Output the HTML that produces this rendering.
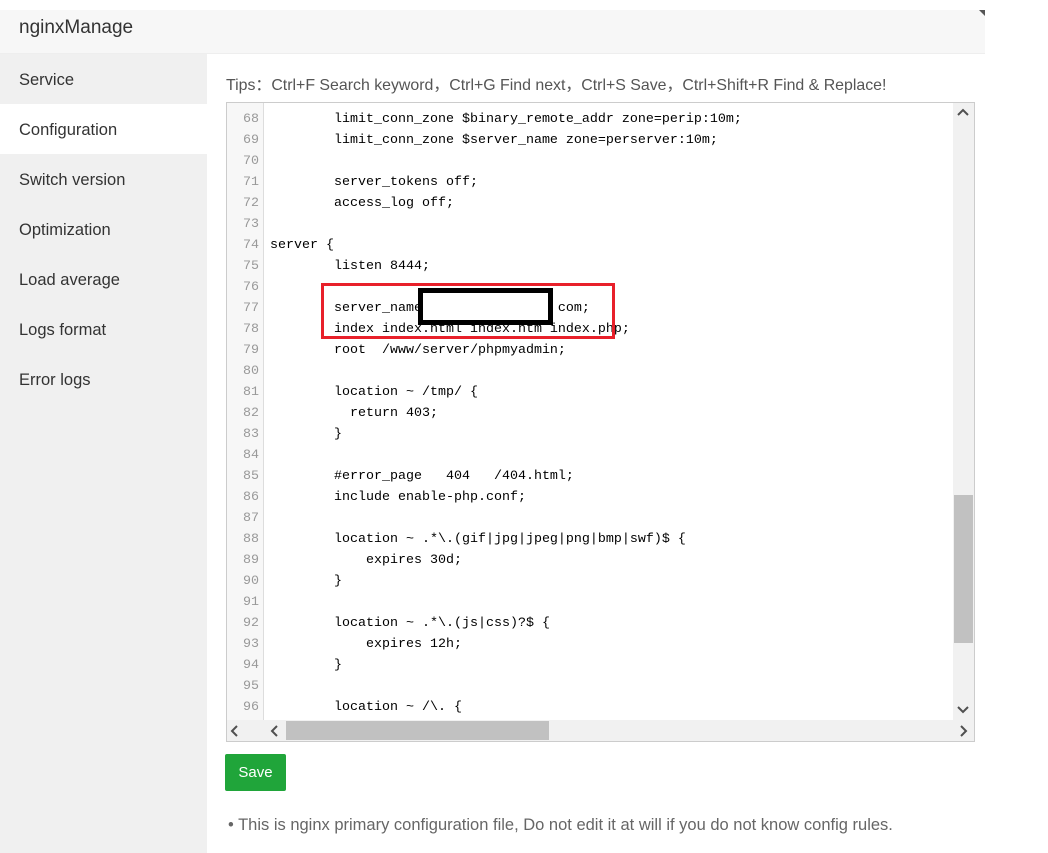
<!DOCTYPE html>
<html><head><style>
body{margin:0;width:1048px;height:853px;background:#fff;font-family:"Liberation Sans",sans-serif;position:relative;overflow:hidden}
.hdr{position:absolute;left:0;top:10px;width:985px;height:43px;background:#f7f7f7;border-bottom:1px solid #eee}
.hdr span{position:absolute;left:19px;top:7px;font-size:19px;color:#333}
.side{position:absolute;left:0;top:54px;width:207px;height:799px;background:#f0f0f0}
.side div{height:50px;line-height:52px;padding-left:19px;font-size:16.5px;color:#333}
.side .act{background:#fff}
.tips{position:absolute;left:226px;top:72px;font-size:15.9px;color:#555}
.ed{position:absolute;left:226px;top:102px;width:747px;height:638px;border:1px solid #ccc;background:#fff;overflow:hidden}
.gut{position:absolute;left:0;top:0;width:36px;height:617px;background:#f7f7f7;border-right:1px solid #ddd}
.code{position:absolute;left:-1px;top:6px;font-family:"Liberation Mono",monospace;font-size:13.33px;line-height:21px;color:#000;white-space:pre}
.ln{display:inline-block;width:33px;text-align:right;color:#999;margin-right:11px}
.vs{position:absolute;right:0;top:0;width:21px;height:617px;background:#f1f1f1}
.vt{position:absolute;right:1px;top:392px;width:19px;height:148px;background:#c1c1c1}
.hs{position:absolute;left:0;top:617px;width:747px;height:21px;background:#f1f1f1}
.ht{position:absolute;left:59px;top:1px;width:263px;height:19px;background:#c1c1c1}
.btn{position:absolute;left:225px;top:754px;width:61px;height:37px;background:#20a53a;color:#fff;font-size:15px;line-height:37px;text-align:center;border-radius:2px}
.note{position:absolute;left:228px;top:816px;font-size:16.5px;color:#666}
.red{position:absolute;left:321px;top:283px;width:288px;height:50px;border:3px solid #e8202a}
.blk{position:absolute;left:418px;top:288px;width:125px;height:27px;border:5px solid #000;background:#fff}
</style></head><body>
<div class="hdr"><span>nginxManage</span></div>
<div style="position:absolute;left:979px;top:10px;width:0;height:0;border-left:6px solid transparent;border-top:6px solid #555"></div>
<div class="side"><div>Service</div><div class="act">Configuration</div><div>Switch version</div><div>Optimization</div><div>Load average</div><div>Logs format</div><div>Error logs</div></div>
<div class="tips">Tips：Ctrl+F Search keyword，Ctrl+G Find next，Ctrl+S Save，Ctrl+Shift+R Find &amp; Replace!</div>
<div class="ed">
<div class="gut"></div>
<div class="code"><span class="ln">68</span>        limit_conn_zone $binary_remote_addr zone=perip:10m;
<span class="ln">69</span>        limit_conn_zone $server_name zone=perserver:10m;
<span class="ln">70</span>
<span class="ln">71</span>        server_tokens off;
<span class="ln">72</span>        access_log off;
<span class="ln">73</span>
<span class="ln">74</span>server {
<span class="ln">75</span>        listen 8444;
<span class="ln">76</span>
<span class="ln">77</span>        server_name                 com;
<span class="ln">78</span>        index index.html index.htm index.php;
<span class="ln">79</span>        root  /www/server/phpmyadmin;
<span class="ln">80</span>
<span class="ln">81</span>        location ~ /tmp/ {
<span class="ln">82</span>          return 403;
<span class="ln">83</span>        }
<span class="ln">84</span>
<span class="ln">85</span>        #error_page   404   /404.html;
<span class="ln">86</span>        include enable-php.conf;
<span class="ln">87</span>
<span class="ln">88</span>        location ~ .*\.(gif|jpg|jpeg|png|bmp|swf)$ {
<span class="ln">89</span>            expires 30d;
<span class="ln">90</span>        }
<span class="ln">91</span>
<span class="ln">92</span>        location ~ .*\.(js|css)?$ {
<span class="ln">93</span>            expires 12h;
<span class="ln">94</span>        }
<span class="ln">95</span>
<span class="ln">96</span>        location ~ /\. {
</div>
<div class="vs"><div class="vt"></div></div>
<div class="hs"><div class="ht"></div></div>
<svg style="position:absolute;left:0;top:0" width="747" height="638"><g fill="none" stroke="#505050" stroke-width="2"><path d="M731 12l5-5 5 5"/><path d="M731 604l5 5 5-5"/><path d="M10 623l-5 5 5 5"/><path d="M50 623l-5 5 5 5"/><path d="M734 623l5 5-5 5"/></g></svg>
</div>
<div class="red"></div>
<div class="blk"></div>
<div class="btn">Save</div>
<div class="note">• This is nginx primary configuration file, Do not edit it at will if you do not know config rules.</div>
</body></html>
